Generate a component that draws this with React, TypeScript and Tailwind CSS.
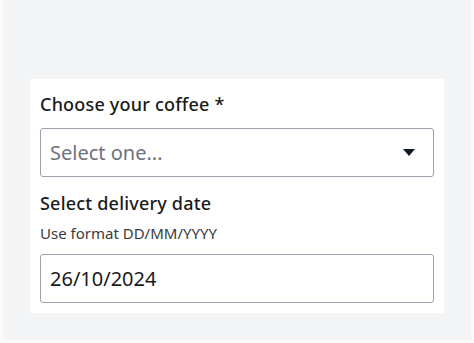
import React from "react";

export default function App() {
  return (
    <div className="w-[474px] h-[343px] bg-[#fafafb] px-[3px] pb-[3px]" style={{ fontFamily: '"Noto Sans", "Open Sans", sans-serif' }}>
      <div className="h-full bg-[#f3f4f6] pt-[79px] pl-[27px] pr-[27px]">
        <div className="bg-white px-[10px] pt-[13px] pb-[10px]">
          {/* Coffee select */}
          <label className="block text-[18px] leading-[24px] font-medium tracking-[0.2px] text-[#1a1a1a]">
            Choose your coffee *
          </label>
          <div className="mt-[12px] h-[49px] border border-[#9ca3af] rounded-[3px] flex items-center justify-between pl-[9px] pr-[18px]">
            <span className="text-[20px] text-[#6b7280]">Select one...</span>
            <svg width="12" height="7" viewBox="0 0 12 7">
              <path d="M0 0 L12 0 L6 7 Z" fill="#111827" />
            </svg>
          </div>

          {/* Delivery date */}
          <label className="block mt-[14px] text-[18px] leading-[24px] font-medium tracking-[0.2px] text-[#1a1a1a]">
            Select delivery date
          </label>
          <p className="mt-[8px] text-[15px] leading-[20px] text-[#3a3a3a]">Use format DD/MM/YYYY</p>
          <div className="mt-[11px] h-[49px] border border-[#9ca3af] rounded-[3px] flex items-center pl-[9px]">
            <span className="text-[20px] text-[#1a1a1a]">26/10/2024</span>
          </div>
        </div>
      </div>
    </div>
  );
}
